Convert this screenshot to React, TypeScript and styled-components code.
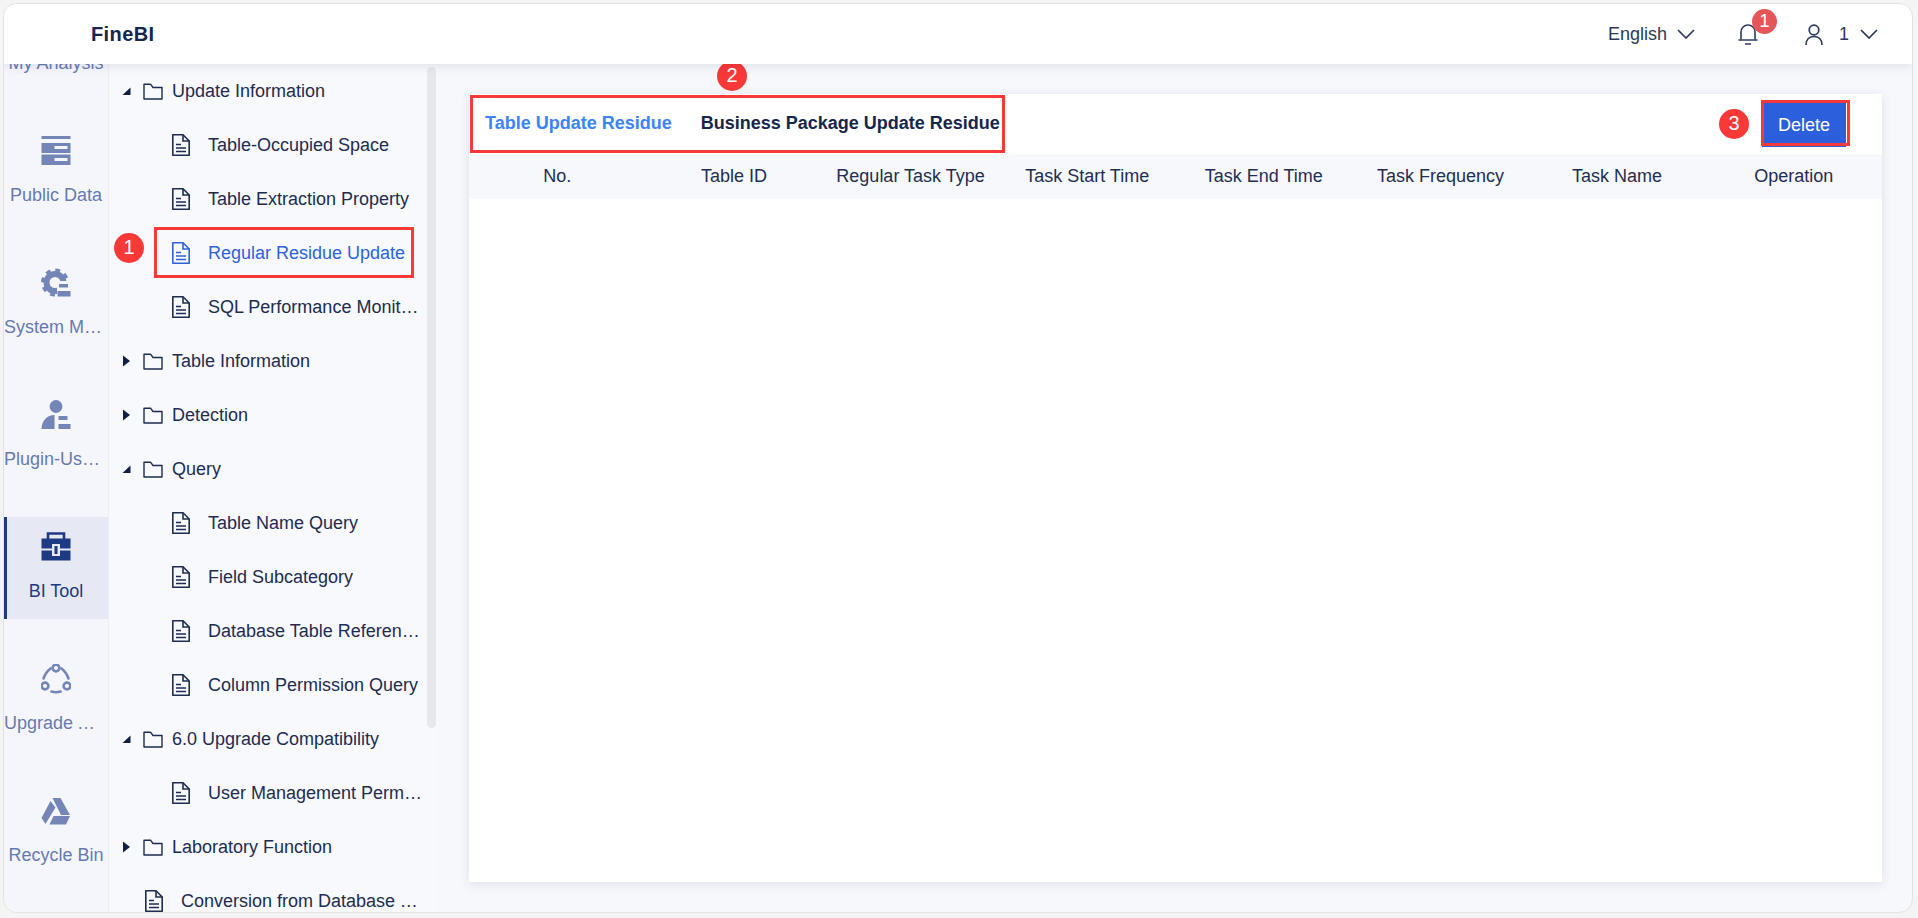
import React from "react";
import styled, { createGlobalStyle } from "styled-components";

const GlobalStyle = createGlobalStyle`
  html, body {
    margin: 0;
    background: #f4f4f4;
    font-family: "Liberation Sans", Arial, sans-serif;
    overflow: hidden;
  }
`;

const Page = styled.div`
  position: relative;
  width: 1918px;
  height: 918px;
  padding: 3px 5px 0 3px;
  box-sizing: border-box;
`;

const Frame = styled.div`
  height: 910px;
  display: flex;
  flex-direction: column;
  box-sizing: border-box;
  border: 1px solid #e2e2e4;
  border-radius: 14px;
  overflow: hidden;
  background: #f7f8fc;
`;

// Header
const Header = styled.header`
  position: relative;
  z-index: 2;
  flex: none;
  height: 60px;
  display: flex;
  align-items: center;
  padding-left: 87px;
  background: #fff;
  box-shadow: 0 2px 10px rgba(40, 50, 90, 0.12);
`;

const Logo = styled.div`
  font-size: 20px;
  font-weight: 700;
  letter-spacing: 0.4px;
  color: #14264c;
`;

const HeaderRight = styled.div`
  margin-left: auto;
  display: flex;
  align-items: center;
  font-size: 18px;
  color: #2b3a5c;
`;

const Language = styled.div`
  display: flex;
  align-items: center;
  gap: 10px;
  margin-right: 43px;
`;

const BellWrap = styled.div`
  position: relative;
  display: flex;
  margin-right: 47px;
`;

const Badge = styled.span`
  position: absolute;
  top: -14px;
  left: 14px;
  width: 25px;
  height: 25px;
  border-radius: 50%;
  background: #e5565a;
  color: #fff;
  font-size: 18px;
  line-height: 25px;
  text-align: center;
`;

const UserBox = styled.div`
  display: flex;
  align-items: center;
  margin-right: 34px;
`;

const UserName = styled.span`
  margin: 0 11px 0 16px;
`;

// Body
const Body = styled.div`
  flex: 1;
  min-height: 0;
  display: flex;
`;

const Rail = styled.nav`
  flex: none;
  width: 104px;
  box-sizing: content-box;
  border-right: 1px solid #eceef3;
  background: #f5f6fb;
  overflow: hidden;
`;

const RailScroll = styled.div`
  margin-top: -75px;
  display: flex;
  flex-direction: column;
  gap: 30px;
`;

const RailItem = styled.div<{ $active?: boolean }>`
  height: 102px;
  box-sizing: border-box;
  padding-top: 15px;
  display: flex;
  flex-direction: column;
  align-items: center;
  background: ${p => (p.$active ? "#e6e9f3" : "transparent")};
  box-shadow: ${p => (p.$active ? "inset 3px 0 0 #1b3a8a" : "none")};
  color: ${p => (p.$active ? "#1f3a84" : "#667ab0")};
`;

const RailIcon = styled.svg`
  width: 30px;
  height: 30px;
  display: block;
  flex: none;
`;

const RailLabel = styled.div<{ $clip?: boolean }>`
  width: 100%;
  box-sizing: border-box;
  margin-top: 17px;
  padding-right: ${p => (p.$clip ? "3px" : "0")};
  font-size: 18px;
  line-height: 24px;
  text-align: center;
  white-space: nowrap;
  overflow: hidden;
  text-overflow: ellipsis;
`;

const TreePanel = styled.div`
  flex: none;
  width: 327px;
  display: flex;
  background: #f8f9fd;
`;

const TreeList = styled.div`
  flex: 1;
  min-width: 0;
  overflow: hidden;
`;

const ScrollThumb = styled.div`
  flex: none;
  width: 9px;
  height: 661px;
  margin-top: 3px;
  border-radius: 5px;
  background: #e6e8ee;
`;

const TreeRow = styled.div<{ $indent: number; $active?: boolean }>`
  height: 54px;
  display: flex;
  align-items: center;
  padding-left: ${p => p.$indent}px;
  padding-right: 3px;
  font-size: 18px;
  color: ${p => (p.$active ? "#2c62dc" : "#1d2c50")};
`;

const ArrowSlot = styled.svg`
  flex: none;
  width: 9px;
  height: 12px;
  margin-right: 12px;
`;

const FolderIcon = styled.svg`
  flex: none;
  width: 20px;
  height: 17px;
  margin-right: 9px;
`;

const DocIcon = styled.svg`
  flex: none;
  width: 18px;
  height: 22px;
`;

const RowText = styled.span<{ $gap?: number }>`
  margin-left: ${p => p.$gap ?? 0}px;
  min-width: 0;
  white-space: nowrap;
  overflow: hidden;
  text-overflow: ellipsis;
`;

const Main = styled.main`
  flex: 1;
  min-width: 0;
  padding: 30px 30px 30px 33px;
  display: flex;
`;

const Card = styled.section`
  flex: 1;
  display: flex;
  flex-direction: column;
  background: #fff;
  box-shadow: 0 2px 10px rgba(40, 50, 90, 0.12);
`;

const TabBar = styled.div`
  height: 60px;
  flex: none;
  display: flex;
  align-items: center;
  padding: 0 36px 0 16px;
  gap: 29px;
`;

const Tab = styled.div<{ $active?: boolean }>`
  margin-bottom: 1px;
  font-size: 18px;
  font-weight: 700;
  color: ${p => (p.$active ? "#3a84f6" : "#14264c")};
`;

const DeleteButton = styled.button`
  margin-left: auto;
  width: 84px;
  height: 45px;
  padding: 2px 0 0;
  border: 0;
  background: #2c5fdc;
  color: #fff;
  font: inherit;
  font-size: 18px;
`;

const TableHead = styled.div`
  height: 45px;
  flex: none;
  display: grid;
  grid-template-columns: repeat(8, 1fr);
  align-items: center;
  background: #f6f8fc;
  font-size: 18px;
  color: #1f2e52;
  text-align: center;
`;

// Numbered red annotations laid over the screenshot
const MarkBox = styled.div<{ $x: number; $y: number; $w: number; $h: number }>`
  position: absolute;
  left: ${p => p.$x}px;
  top: ${p => p.$y}px;
  width: ${p => p.$w}px;
  height: ${p => p.$h}px;
  box-sizing: border-box;
  border: 3px solid #f93838;
  pointer-events: none;
`;

const MarkDot = styled.div<{ $x: number; $y: number }>`
  position: absolute;
  left: ${p => p.$x - 15}px;
  top: ${p => p.$y - 15}px;
  width: 30px;
  height: 30px;
  border-radius: 50%;
  background: #f93838;
  color: #fff;
  font-size: 20px;
  line-height: 29px;
  text-align: center;
`;

const IconPublicData = () => (
  <RailIcon viewBox="0 0 30 30" fill="#7485b7">
    <rect x="0.5" y="0" width="29" height="3" />
    <path fillRule="evenodd" d="M0.5 7H29.5V17H0.5ZM13.5 10V13H26.5V10Z" />
    <path fillRule="evenodd" d="M0.5 18.5H29.5V29H0.5ZM13.5 22V25H26.5V22Z" />
  </RailIcon>
);

const IconSystem = () => (
  <RailIcon viewBox="0 0 30 30" fill="#7485b7">
    <clipPath id="gear-cut">
      <path d="M0 0H30V13H16V30H0Z" />
    </clipPath>
    <g clipPath="url(#gear-cut)" fill="none" stroke="#7485b7">
      <circle cx="14" cy="14.5" r="8.5" strokeWidth="6" />
      <circle cx="14" cy="14.5" r="12.5" strokeWidth="3" strokeDasharray="4.9 4.9" />
    </g>
    <rect x="18" y="16" width="9" height="3.5" />
    <rect x="16.5" y="23" width="13" height="5.5" />
  </RailIcon>
);

const IconPlugin = () => (
  <RailIcon viewBox="0 0 30 30" fill="#7485b7">
    <circle cx="15" cy="6.5" r="6.4" />
    <path d="M0.5 29C0.5 21 6 15 13.5 15V29Z" />
    <rect x="17.5" y="16" width="9" height="4" />
    <rect x="17.5" y="24" width="12" height="5" />
  </RailIcon>
);

const IconTool = () => (
  <RailIcon viewBox="0 0 30 30" fill="#1f3a84">
    <path fill="none" stroke="#1f3a84" strokeWidth="2.6" d="M7 7V1.5H23V7" />
    <rect x="0.5" y="6.5" width="29" height="10" />
    <rect x="0.5" y="18.5" width="29" height="10" />
    <rect x="11" y="12" width="8" height="12" fill="#e6e9f3" />
    <rect x="13.5" y="14" width="3" height="8" />
  </RailIcon>
);

const IconUpgrade = () => (
  <RailIcon viewBox="0 0 30 30" fill="none" stroke="#7485b7" strokeWidth="2.6">
    <circle cx="15" cy="4" r="3.4" />
    <circle cx="4" cy="22" r="3.4" />
    <circle cx="26" cy="22" r="3.4" />
    <path d="M9.5 4.5Q4.5 8.5 2.5 14.5" strokeLinecap="round" />
    <path d="M20.5 4.5Q25.5 8.5 27.5 14.5" strokeLinecap="round" />
    <path d="M10.5 27.5Q15 29 19.5 27.5" strokeLinecap="round" />
  </RailIcon>
);

const IconRecycle = () => (
  <RailIcon viewBox="0 0 30 30" fill="#7485b7">
    <path d="M9.5 5L0.5 22L4.5 28L14.5 11.5Z" />
    <path d="M11.5 2H19.5L29 19H20Z" />
    <path d="M8.5 28.5H25L29 20H12.5Z" />
  </RailIcon>
);

const Arrow = ({ open }: { open: boolean }) => (
  <ArrowSlot viewBox="0 0 9 12" fill="#0f1f47">
    {open ? <path d="M8.5 2.5V10H0.5Z" /> : <path d="M1 0.5L8 6L1 11.5Z" />}
  </ArrowSlot>
);

const Folder = () => (
  <FolderIcon viewBox="0 0 20 17" fill="none" stroke="#1d2c50" strokeWidth="1.4">
    <path d="M1 1.2H7.5L10 4.5H19V16H1Z" strokeLinejoin="round" />
  </FolderIcon>
);

const Doc = ({ active }: { active?: boolean }) => (
  <DocIcon viewBox="0 0 18 22" fill="none" stroke={active ? "#2c62dc" : "#1d2c50"} strokeWidth="1.6">
    <path d="M0.8 0.8H11L17.2 7V21.2H0.8Z" strokeLinejoin="round" />
    <path d="M11 0.8V7H17.2" />
    <path d="M4 10.5H9M4 14H14M4 17.5H14" strokeWidth="1.4" />
  </DocIcon>
);

const Chevron = () => (
  <svg width="18" height="10" viewBox="0 0 18 10" fill="none" stroke="#2b3a5c" strokeWidth="1.7">
    <path d="M1 1L9 9L17 1" />
  </svg>
);

const railItems = [
  { label: "My Analysis", icon: <IconPublicData /> },
  { label: "Public Data", icon: <IconPublicData /> },
  { label: "System Management", icon: <IconSystem />, clip: true },
  { label: "Plugin-User Management", icon: <IconPlugin />, clip: true },
  { label: "BI Tool", icon: <IconTool />, active: true },
  { label: "Upgrade Assistant", icon: <IconUpgrade />, clip: true },
  { label: "Recycle Bin", icon: <IconRecycle /> },
];

type TreeNode =
  | { kind: "folder"; label: string; open: boolean }
  | { kind: "leaf"; label: string; active?: boolean }
  | { kind: "root-leaf"; label: string };

const treeRows: TreeNode[] = [
  { kind: "folder", label: "Update Information", open: true },
  { kind: "leaf", label: "Table-Occupied Space" },
  { kind: "leaf", label: "Table Extraction Property" },
  { kind: "leaf", label: "Regular Residue Update", active: true },
  { kind: "leaf", label: "SQL Performance Monitoring" },
  { kind: "folder", label: "Table Information", open: false },
  { kind: "folder", label: "Detection", open: false },
  { kind: "folder", label: "Query", open: true },
  { kind: "leaf", label: "Table Name Query" },
  { kind: "leaf", label: "Field Subcategory" },
  { kind: "leaf", label: "Database Table Reference Relationship" },
  { kind: "leaf", label: "Column Permission Query" },
  { kind: "folder", label: "6.0 Upgrade Compatibility", open: true },
  { kind: "leaf", label: "User Management Permission" },
  { kind: "folder", label: "Laboratory Function", open: false },
  { kind: "root-leaf", label: "Conversion from Database Table" },
];

const columns = [
  "No.",
  "Table ID",
  "Regular Task Type",
  "Task Start Time",
  "Task End Time",
  "Task Frequency",
  "Task Name",
  "Operation",
];

const renderRow = (row: TreeNode) => {
  if (row.kind === "folder") {
    return (
      <TreeRow key={row.label} $indent={13}>
        <Arrow open={row.open} />
        <Folder />
        <RowText>{row.label}</RowText>
      </TreeRow>
    );
  }
  if (row.kind === "leaf") {
    return (
      <TreeRow key={row.label} $indent={63} $active={row.active}>
        <Doc active={row.active} />
        <RowText $gap={18}>{row.label}</RowText>
      </TreeRow>
    );
  }
  return (
    <TreeRow key={row.label} $indent={36}>
      <Doc />
      <RowText $gap={18}>{row.label}</RowText>
    </TreeRow>
  );
};

const App: React.FC = () => {
  return (
    <Page>
      <GlobalStyle />
      <Frame>
        <Header>
          <Logo>FineBI</Logo>
          <HeaderRight>
            <Language>
              English
              <Chevron />
            </Language>
            <BellWrap>
              <svg width="20" height="22" viewBox="0 0 20 22" fill="none" stroke="#2b3a5c" strokeWidth="1.6">
                <path d="M3 16.5V9A7 7 0 0 1 17 9V16.5" />
                <path d="M0.5 17H19.5" />
                <path d="M7 21H13" />
              </svg>
              <Badge>1</Badge>
            </BellWrap>
            <UserBox>
              <svg width="18" height="21" viewBox="0 0 18 21" fill="none" stroke="#2b3a5c" strokeWidth="1.7">
                <circle cx="9" cy="6" r="4.8" />
                <path d="M1 21C1 15.5 4.5 12.5 9 12.5C13.5 12.5 17 15.5 17 21" />
              </svg>
              <UserName>1</UserName>
              <Chevron />
            </UserBox>
          </HeaderRight>
        </Header>
        <Body>
          <Rail>
            <RailScroll>
              {railItems.map(item => (
                <RailItem key={item.label} $active={item.active}>
                  {item.icon}
                  <RailLabel $clip={item.clip}>{item.label}</RailLabel>
                </RailItem>
              ))}
            </RailScroll>
          </Rail>
          <TreePanel>
            <TreeList>{treeRows.map(renderRow)}</TreeList>
            <ScrollThumb />
          </TreePanel>
          <Main>
            <Card>
              <TabBar>
                <Tab $active>Table Update Residue</Tab>
                <Tab>Business Package Update Residue</Tab>
                <DeleteButton>Delete</DeleteButton>
              </TabBar>
              <TableHead>
                {columns.map(c => (
                  <div key={c}>{c}</div>
                ))}
              </TableHead>
            </Card>
          </Main>
        </Body>
      </Frame>

      <MarkBox $x={154} $y={227} $w={260} $h={51} />
      <MarkDot $x={129} $y={248}>1</MarkDot>
      <MarkBox $x={470} $y={95} $w={535} $h={58} />
      <MarkDot $x={732} $y={76}>2</MarkDot>
      <MarkBox $x={1761} $y={100} $w={89} $h={46} />
      <MarkDot $x={1734} $y={124}>3</MarkDot>
    </Page>
  );
};

export default App;
